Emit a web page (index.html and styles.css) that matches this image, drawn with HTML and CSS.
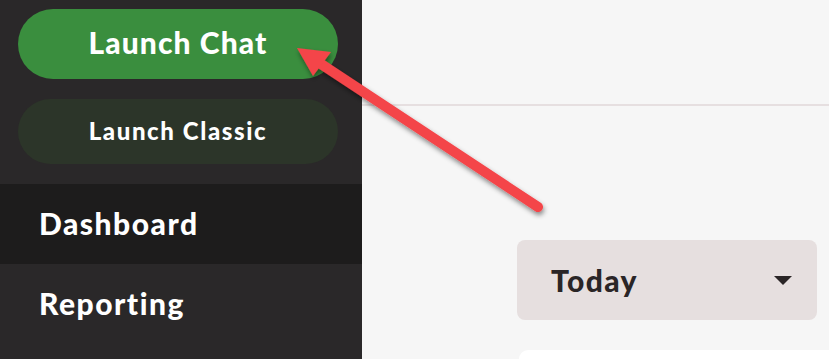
FILE: index.html
```html
<!DOCTYPE html>
<html>
<head>
<meta charset="utf-8">
<link rel="stylesheet" href="styles.css">
</head>
<body>
<div class="app">
  <aside class="sidebar">
    <div class="launchers">
      <button class="btn btn-chat">Launch Chat</button>
      <button class="btn btn-classic">Launch Classic</button>
    </div>
    <nav class="nav">
      <div class="nav-item active">Dashboard</div>
      <div class="nav-item">Reporting</div>
    </nav>
  </aside>
  <main class="main">
    <header class="topbar"></header>
    <section class="content">
      <div class="select">
        <span class="select-label">Today</span>
        <span class="caret"></span>
      </div>
      <div class="card"></div>
    </section>
  </main>
</div>
<svg class="annotation" width="829" height="359" viewBox="0 0 829 359">
  <defs>
    <filter id="sh" x="-20%" y="-20%" width="140%" height="140%">
      <feDropShadow dx="1" dy="3" stdDeviation="2.5" flood-color="#000" flood-opacity="0.45"/>
    </filter>
  </defs>
  <g filter="url(#sh)">
    <line x1="538" y1="207" x2="318" y2="62" stroke="#f44448" stroke-width="10" stroke-linecap="round"/>
    <polygon points="297,48 331,52 313,76" fill="#f44448"/>
  </g>
</svg>
</body>
</html>
```
FILE: styles.css
```css
* { box-sizing: border-box; }
html, body { margin: 0; padding: 0; }
body {
  width: 829px;
  height: 359px;
  overflow: hidden;
  font-family: Lato, "Open Sans", sans-serif;
  background: #f6f6f6;
  position: relative;
}
.app {
  display: flex;
  height: 359px;
}
.sidebar {
  width: 362px;
  flex: none;
  background: #2a2829;
  display: flex;
  flex-direction: column;
}
.launchers {
  display: flex;
  flex-direction: column;
  gap: 20px;
  padding: 9px 24px 20px 18px;
}
.btn {
  border: none;
  color: #ffffff;
  font-family: Lato, sans-serif;
  font-weight: 900;
  width: 320px;
  display: flex;
  align-items: center;
  justify-content: center;
  padding: 0;
}
.btn-chat {
  height: 70px;
  border-radius: 35px;
  background: #3a8e3e;
  font-size: 30px;
  letter-spacing: 1.1px;
  padding-bottom: 4px;
}
.btn-classic {
  height: 65px;
  border-radius: 33px;
  background: #2c3529;
  font-size: 24px;
  letter-spacing: 1.6px;
  padding-bottom: 2px;
}
.nav {
  display: flex;
  flex-direction: column;
}
.nav-item {
  height: 80px;
  display: flex;
  align-items: center;
  padding-left: 39px;
  color: #ffffff;
  font-weight: 900;
  font-size: 30px;
  letter-spacing: 1.5px;
  padding-bottom: 2px;
}
.nav-item.active {
  background: #1d1c1c;
}
.main {
  flex: 1;
  display: flex;
  flex-direction: column;
  background: #f6f6f6;
}
.topbar {
  height: 106px;
  flex: none;
  border-bottom: 2px solid #e6dfe0;
}
.content {
  padding: 134px 0 0 155px;
  display: flex;
  flex-direction: column;
  gap: 30px;
}
.select {
  width: 300px;
  height: 80px;
  background: #e6dfdf;
  border-radius: 8px;
  display: flex;
  align-items: center;
  justify-content: space-between;
  padding: 0 25px 0 34px;
}
.select-label {
  font-weight: 900;
  font-size: 30px;
  letter-spacing: 1.4px;
  color: #2a2526;
}
.caret {
  width: 0;
  height: 0;
  border-left: 9px solid transparent;
  border-right: 9px solid transparent;
  border-top: 9px solid #2a2526;
}
.card {
  margin-left: 2px;
  height: 9px;
  background: #ffffff;
  border-radius: 10px 0 0 0;
}
.annotation {
  position: absolute;
  left: 0;
  top: 0;
  pointer-events: none;
}
```
